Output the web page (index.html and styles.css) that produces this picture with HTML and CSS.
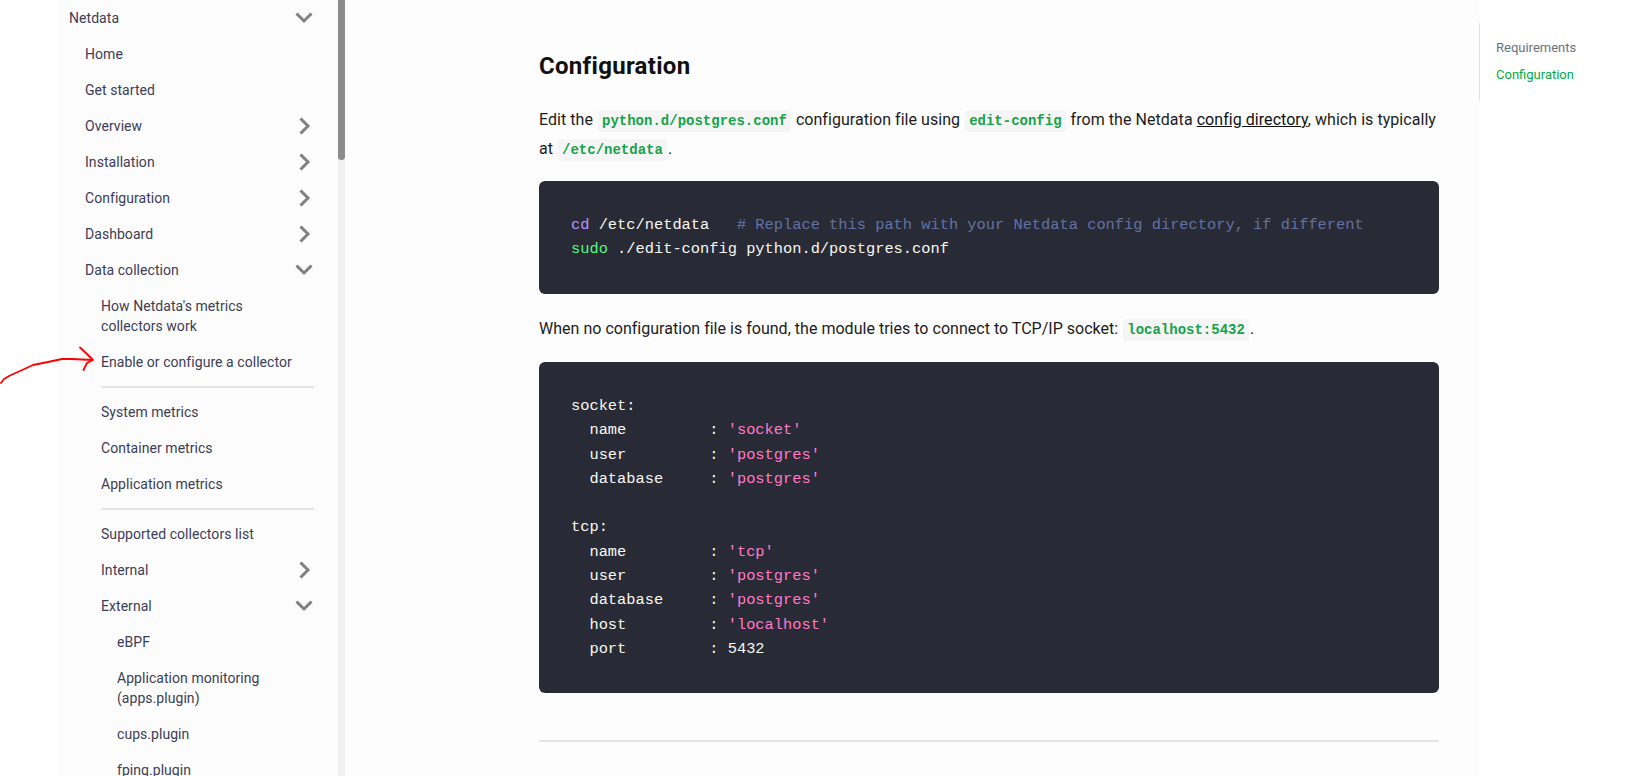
FILE: index.html
```html
<!DOCTYPE html>
<html lang="en">
<head>
<meta charset="utf-8">
<title>Netdata docs</title>
<link rel="stylesheet" href="styles.css">
</head>
<body>
<div class="page">
  <nav class="sidebar">
    <div class="row"><span>Netdata</span><svg class="chev" viewBox="0 0 24 24"><path d="M4.500 7.500 12 15l7.500-7.500"/></svg></div>
    <div class="l1">
      <div class="row"><span>Home</span></div>
      <div class="row"><span>Get started</span></div>
      <div class="row"><span>Overview</span><svg class="chev" viewBox="0 0 24 24"><path d="M8.500 4.500 16 12l-7.500 7.500"/></svg></div>
      <div class="row"><span>Installation</span><svg class="chev" viewBox="0 0 24 24"><path d="M8.500 4.500 16 12l-7.500 7.500"/></svg></div>
      <div class="row"><span>Configuration</span><svg class="chev" viewBox="0 0 24 24"><path d="M8.500 4.500 16 12l-7.500 7.500"/></svg></div>
      <div class="row"><span>Dashboard</span><svg class="chev" viewBox="0 0 24 24"><path d="M8.500 4.500 16 12l-7.500 7.500"/></svg></div>
      <div class="row"><span>Data collection</span><svg class="chev" viewBox="0 0 24 24"><path d="M4.500 7.500 12 15l7.500-7.500"/></svg></div>
      <div class="l1">
        <div class="row"><span>How Netdata's metrics<br>collectors work</span></div>
        <div class="row"><span>Enable or configure a collector</span></div>
        <div class="rule"></div>
        <div class="row"><span>System metrics</span></div>
        <div class="row"><span>Container metrics</span></div>
        <div class="row"><span>Application metrics</span></div>
        <div class="rule"></div>
        <div class="row"><span>Supported collectors list</span></div>
        <div class="row"><span>Internal</span><svg class="chev" viewBox="0 0 24 24"><path d="M8.500 4.500 16 12l-7.500 7.500"/></svg></div>
        <div class="row"><span>External</span><svg class="chev" viewBox="0 0 24 24"><path d="M4.500 7.500 12 15l7.500-7.500"/></svg></div>
        <div class="l1">
          <div class="row"><span>eBPF</span></div>
          <div class="row"><span>Application monitoring<br>(apps.plugin)</span></div>
          <div class="row"><span>cups.plugin</span></div>
          <div class="row"><span>fping.plugin</span></div>
        </div>
      </div>
    </div>
  </nav>
  <div class="scrollbar"><div class="thumb"></div></div>
  <main class="content">
    <h2 class="title">Configuration</h2>
    <p class="para">Edit the <code class="pill">python.d/postgres.conf</code> configuration file using <code class="pill">edit-config</code> from the Netdata <a class="link" href="#">config directory</a>, which is typically at <code class="pill">/etc/netdata</code>.</p>
    <pre class="code code-short"><span class="purple">cd</span> /etc/netdata   <span class="comment"># Replace this path with your Netdata config directory, if different</span>
<span class="green">sudo</span> ./edit-config python.d/postgres.conf</pre>
    <p class="para para-two">When no configuration file is found, the module tries to connect to TCP/IP socket: <code class="pill">localhost:5432</code>.</p>
    <pre class="code code-long">socket:
  name         : <span class="pink">'socket'</span>
  user         : <span class="pink">'postgres'</span>
  database     : <span class="pink">'postgres'</span>

tcp:
  name         : <span class="pink">'tcp'</span>
  user         : <span class="pink">'postgres'</span>
  database     : <span class="pink">'postgres'</span>
  host         : <span class="pink">'localhost'</span>
  port         : 5432</pre>
    <hr class="divider">
  </main>
  <aside class="toc">
    <div class="toc-item">Requirements</div>
    <div class="toc-item toc-active">Configuration</div>
  </aside>
</div>
<svg class="scribble" viewBox="0 0 110 60" width="110" height="60"><path d="M1 48 4 44 10 40.500 20 36 33 30 48 27 62 24 72 24 92 25M80 12.500 87 19 93 25 87 28 83.500 35"/></svg>
</body>
</html>
```
FILE: styles.css
```css
html, body {
  margin: 0;
  padding: 0;
  height: 776px;
  overflow: hidden;
  background: #ffffff;
}

.page {
  display: flex;
  height: 776px;
  overflow: hidden;
  padding-left: 59px;
  box-sizing: border-box;
  font-family: Roboto, "Liberation Sans", sans-serif;
}

.sidebar {
  width: 279px;
  flex: none;
  box-sizing: border-box;
  padding: 0 22px 0 10px;
  background: #fcfcfc;
  overflow: hidden;
  color: #3c3d56;
  font-size: 14px;
  line-height: 20px;
}

.l1 {
  padding-left: 16px;
}

.row {
  display: flex;
  justify-content: space-between;
  align-items: center;
  padding: 8px 0;
  min-height: 20px;
  letter-spacing: 0.05px;
}

.chev {
  width: 24px;
  height: 24px;
  margin: -2px 0;
  flex: none;
  fill: none;
  stroke: #808080;
  stroke-width: 3;
}

.rule {
  height: 2px;
  background: #e5e5e5;
  margin: 6px 2px 6px 0;
}

.scrollbar {
  width: 7px;
  flex: none;
  background: #f0f0f0;
}

.thumb {
  height: 160px;
  background: #8c8c8c;
  border-radius: 0 0 4px 4px;
}

.content {
  flex: none;
  width: 900px;
  padding: 50px 40px 0 194px;
  background: #fdfdfd;
  color: #1c1c1c;
}

.title {
  margin: 0 0 24px;
  font-size: 24px;
  line-height: 32px;
  font-weight: 700;
  letter-spacing: 0.3px;
  color: #111111;
}

.para {
  margin: 0 0 17px;
  font-size: 16px;
  line-height: 28px;
  letter-spacing: 0.05px;
}

.para-two {
  margin: 21px 0 18px;
  letter-spacing: 0.02px;
}

.pill {
  font-family: "Liberation Mono", monospace;
  font-size: 14px;
  font-weight: 700;
  letter-spacing: 0;
  color: #16a34a;
  background: #f5f5f5;
  padding: 3px 4px;
  margin: 0 1px;
  border-radius: 4px;
}

.link {
  color: #111111;
  text-decoration: underline;
}

.code {
  margin: 0;
  background: #282a36;
  border-radius: 6px;
  color: #f8f8f2;
  font-family: "Liberation Mono", monospace;
  font-size: 15.36px;
}

.code-short {
  padding: 32px 32px 33px;
  line-height: 24px;
}

.code-long {
  padding: 32px 32px 32px;
  line-height: 24.3px;
}

.purple { color: #bd93f9; }
.green { color: #50fa7b; }
.comment { color: #6272a4; }
.pink { color: #ff79c6; }

.divider {
  border: 0;
  height: 2px;
  background: #e5e5e5;
  margin: 47px 0 0;
}

.toc {
  flex: none;
  align-self: flex-start;
  margin: 23px 0 0 0;
  padding: 11px 0 13px 16px;
  border-left: 1px solid #e0e0e0;
  font-size: 13px;
  line-height: 27px;
  color: #6b7280;
}

.toc-active {
  color: #00ab44;
}

.scribble {
  position: absolute;
  left: 0;
  top: 335px;
  fill: none;
  stroke: #ff0000;
  stroke-width: 1.8;
  stroke-linecap: round;
  stroke-linejoin: round;
}
```
